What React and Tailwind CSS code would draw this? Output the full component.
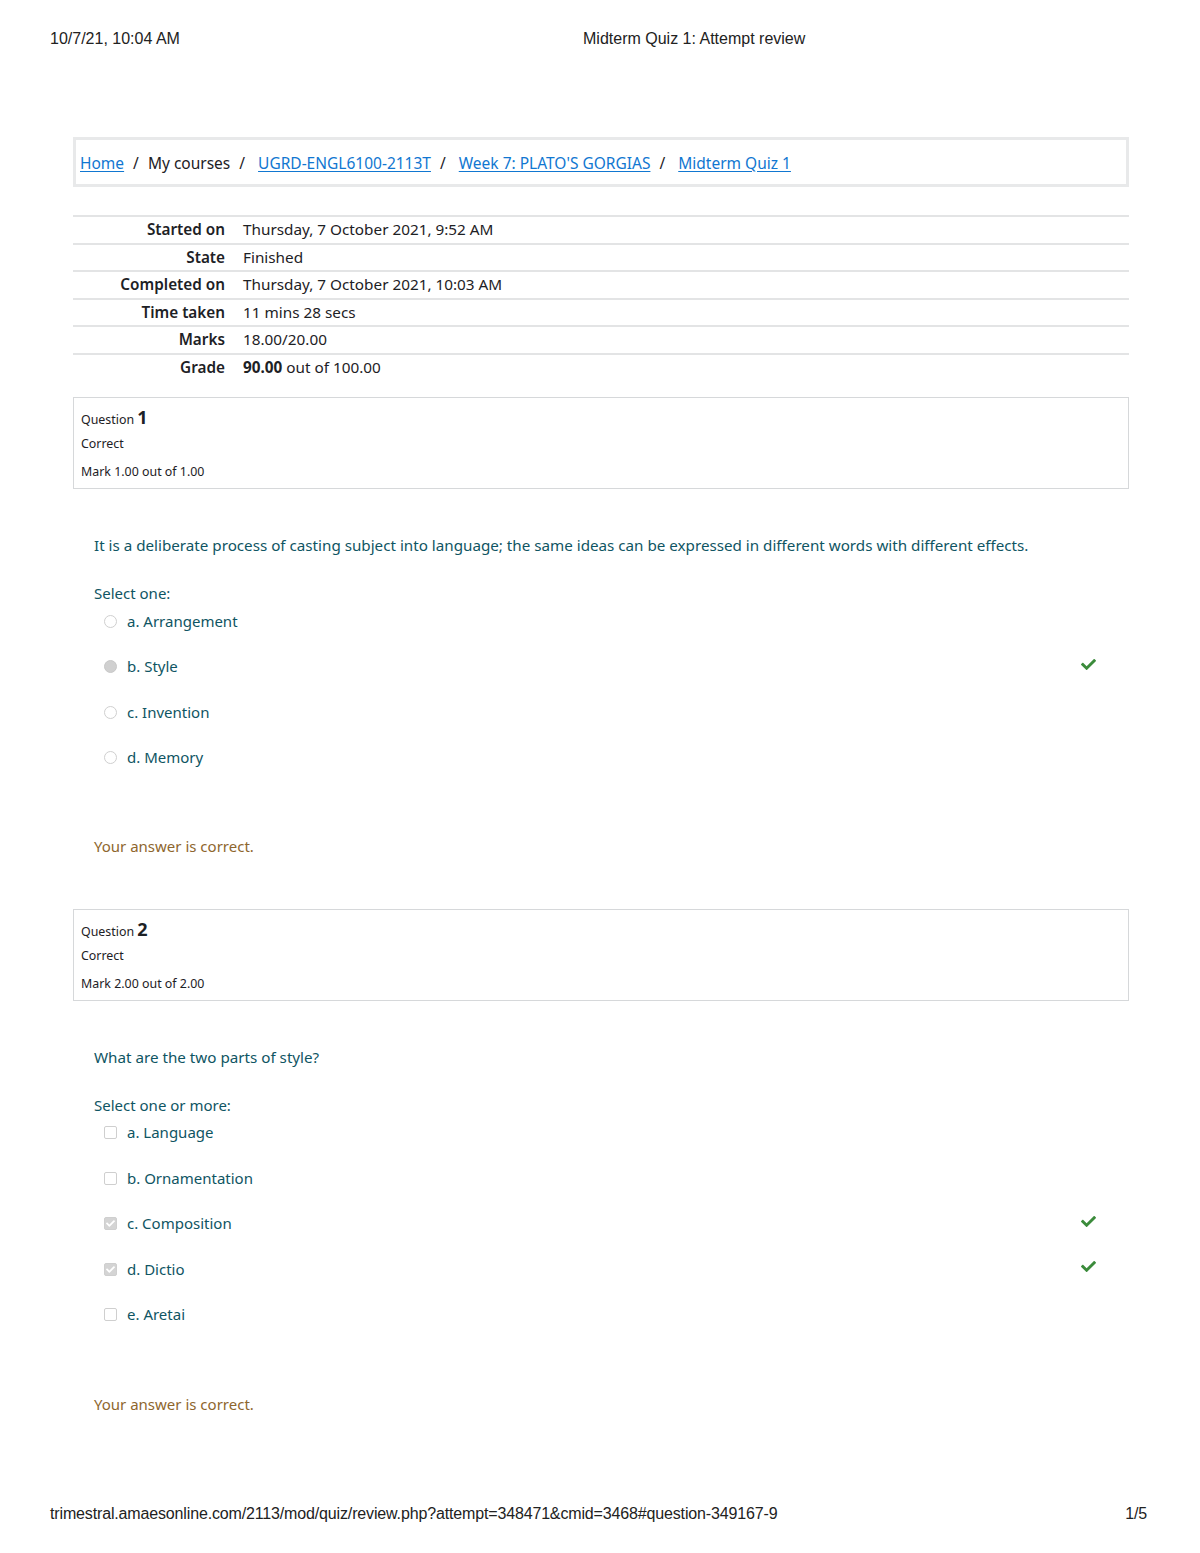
import { FaCheck } from "react-icons/fa";

const summary = [
  { label: "Started on", value: "Thursday, 7 October 2021, 9:52 AM" },
  { label: "State", value: "Finished" },
  { label: "Completed on", value: "Thursday, 7 October 2021, 10:03 AM" },
  { label: "Time taken", value: "11 mins 28 secs" },
  { label: "Marks", value: "18.00/20.00" },
  { label: "Grade", value: <><b>90.00</b> out of 100.00</> },
];

const crumbs = ["Home", "My courses", "UGRD-ENGL6100-2113T", "Week 7: PLATO'S GORGIAS", "Midterm Quiz 1"];

function Breadcrumb() {
  return (
    <div className="mt-[90px] h-[50px] border-[3px] border-[#e8e9ea] flex items-center pl-[4px] pt-[3px] text-[15.5px]">
      {crumbs.map((c, i) => (
        <span key={c} className="flex items-center">
          {c === "My courses" ? (
            <span className="text-[#1d2125]">{c}</span>
          ) : (
            <a href="#" className={`text-[#1177d1] underline underline-offset-2 ${i > 0 ? "ml-[4px]" : ""}`}>{c}</a>
          )}
          {i < crumbs.length - 1 && <span className="text-[#1d2125] mx-[9px]">/</span>}
        </span>
      ))}
    </div>
  );
}

function Summary() {
  return (
    <div className="mt-[28px] text-[15.3px] text-[#1d2125]">
      {summary.map((r) => (
        <div key={r.label} className="h-[27.5px] flex items-center border-t-2 border-[#e3e4e5]">
          <div className="w-[152px] text-right font-semibold">{r.label}</div>
          <div className="ml-[18px]">{r.value}</div>
        </div>
      ))}
    </div>
  );
}

function QuestionInfo({ num, mark, className }) {
  return (
    <div className={`h-[92px] border border-[#d6d8da] pl-[7px] pt-[9px] text-[12.4px] text-[#1d2125] ${className}`}>
      <div className="leading-[20px]">
        Question <span className="text-[18px] font-bold">{num}</span>
      </div>
      <div className="mt-[4px] leading-[20px]">Correct</div>
      <div className="mt-[8px] leading-[20px]">Mark {mark} out of {mark}</div>
    </div>
  );
}

function Radio({ checked }) {
  return (
    <span className={`w-[13px] h-[13px] rounded-full border ${checked ? "border-[#c8c8c8] bg-[#d0d0d0]" : "border-[#cfcfcf] bg-white"}`} />
  );
}

function Box({ checked }) {
  return (
    <span className={`w-[13px] h-[13px] rounded-[2px] border flex items-center justify-center ${checked ? "border-[#cfcfcf] bg-[#d4d4d4]" : "border-[#cfcfcf] bg-white"}`}>
      {checked && <FaCheck className="text-white" size={9} />}
    </span>
  );
}

function Options({ items, multi }) {
  return (
    <div className="mt-[6px] flex flex-col gap-[23.5px] text-[15px]">
      {items.map((o) => (
        <div key={o.text} className="h-[22px] flex items-center">
          <div className="w-[33px] pl-[10px] flex items-center">
            {multi ? <Box checked={o.checked} /> : <Radio checked={o.checked} />}
          </div>
          <span>{o.text}</span>
          {o.checked && <FaCheck className="ml-auto mr-[33px] -mt-[5px] text-[#3b8b3b]" size={15} />}
        </div>
      ))}
    </div>
  );
}

export default function App() {
  return (
    <div className="w-[1200px] h-[1553px] bg-white flex flex-col" style={{ fontFamily: '"Noto Sans", "Open Sans", sans-serif' }}>
      <div className="pt-[30px] px-[50px] flex text-[16px] leading-[17px] text-[#222]" style={{ fontFamily: '"Liberation Sans", Arial, sans-serif' }}>
        <span className="w-[533px]">10/7/21, 10:04 AM</span>
        <span>Midterm Quiz 1: Attempt review</span>
      </div>

      <div className="mx-[73px] w-[1056px]">
        <Breadcrumb />
        <Summary />

        <QuestionInfo num="1" mark="1.00" className="mt-[17px]" />
        <div className="ml-[21px] text-[15.2px] text-[#0f5563]">
          <p className="mt-[45px] leading-[22px]">
            It is a deliberate process of casting subject into language; the same ideas can be expressed in different words with different effects.
          </p>
          <p className="mt-[26px] leading-[22px] text-[15px]">Select one:</p>
          <Options
            items={[
              { text: "a. Arrangement" },
              { text: "b. Style", checked: true },
              { text: "c. Invention" },
              { text: "d. Memory" },
            ]}
          />
          <p className="mt-[66px] leading-[22px] text-[15px] text-[#8e662e]">Your answer is correct.</p>
        </div>

        <QuestionInfo num="2" mark="2.00" className="mt-[52px]" />
        <div className="ml-[21px] text-[15.2px] text-[#0f5563]">
          <p className="mt-[45px] leading-[22px]">What are the two parts of style?</p>
          <p className="mt-[26px] leading-[22px] text-[15px]">Select one or more:</p>
          <Options
            multi
            items={[
              { text: "a. Language" },
              { text: "b. Ornamentation" },
              { text: "c. Composition", checked: true },
              { text: "d. Dictio", checked: true },
              { text: "e. Aretai" },
            ]}
          />
          <p className="mt-[67px] leading-[22px] text-[15px] text-[#8e662e]">Your answer is correct.</p>
        </div>
      </div>

      <div className="mt-auto pb-[31px] px-[50px] flex justify-between text-[16px] leading-[17px] text-[#222] tracking-[-0.15px]" style={{ fontFamily: '"Liberation Sans", Arial, sans-serif' }}>
        <span>trimestral.amaesonline.com/2113/mod/quiz/review.php?attempt=348471&amp;cmid=3468#question-349167-9</span>
        <span className="mr-[3px]">1/5</span>
      </div>
    </div>
  );
}
